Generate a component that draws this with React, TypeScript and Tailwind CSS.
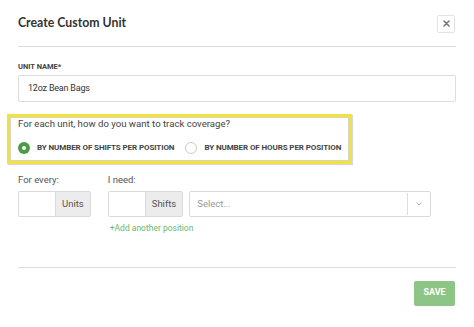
import React from "react"

function Radio({ checked, label }: { checked?: boolean; label: string }) {
  return (
    <label className="flex items-center gap-[7px] whitespace-nowrap">
      {checked ? (
        <span className="flex h-[12px] w-[12px] items-center justify-center rounded-full bg-[#4a9d45]">
          <span className="h-[4px] w-[4px] rounded-full bg-white" />
        </span>
      ) : (
        <span className="h-[12px] w-[12px] rounded-full border border-[#c8c8c8] bg-white" />
      )}
      <span className="text-[8px] font-bold uppercase tracking-[-0.1px] text-[#444]">{label}</span>
    </label>
  )
}

function AddonInput({ addon }: { addon: string }) {
  return (
    <div className="flex h-[26px] overflow-hidden rounded-[2px] border border-[#d9d9d9]">
      <div className="w-[36px] bg-white" />
      <div className="flex items-center border-l border-[#d9d9d9] bg-[#ececec] px-[6px] text-[9.5px] text-[#555]">{addon}</div>
    </div>
  )
}

export default function App() {
  return (
    <div className="h-[327px] w-[474px] bg-white px-[18px] font-['Roboto','Open_Sans',sans-serif] text-[#333]">
      {/* header */}
      <div className="flex h-[47px] items-center justify-between border-b border-[#ddd] pt-[1px]">
        <h1 className="font-['Lato',sans-serif] text-[12.3px] font-bold text-[#333]">Create Custom Unit</h1>
        <button className="mr-[1px] flex h-[18px] w-[18px] items-center justify-center rounded-[2px] border border-[#e2e2e2]">
          <svg width="7" height="7" viewBox="0 0 7 7" stroke="#777" strokeWidth="1.6" strokeLinecap="round">
            <path d="M1 1 L6 6 M6 1 L1 6" />
          </svg>
        </button>
      </div>

      {/* unit name */}
      <div className="pt-[14px] text-[7.5px] font-bold uppercase text-[#444]">Unit Name*</div>
      <div className="mt-[3px] flex h-[27px] items-center rounded-[2px] border border-[#dcdcdc] px-[9px] text-[9px] tracking-[-0.2px] text-[#333]">
        12oz Bean Bags
      </div>

      {/* coverage choice */}
      <div className="-ml-[11px] mt-[12px] w-[345px] border-[3px] border-[#f2e23c] px-[8px] pb-[7px] pt-0 shadow-[inset_0_0_0_1px_rgba(90,80,40,0.25),1px_1px_1px_rgba(0,0,0,0.15)]">
        <div className="text-[9.6px] text-[#444]">For each unit, how do you want to track coverage?</div>
        <div className="mt-[10px] flex items-center gap-[11px]">
          <Radio checked label="By number of shifts per position" />
          <Radio label="By number of hours per position" />
        </div>
      </div>

      {/* requirement row */}
      <div className="mt-[9px] flex gap-[17px]">
        <div className="flex flex-col">
          <span className="text-[9.5px] text-[#555]">For every:</span>
          <div className="mt-[4px]">
            <AddonInput addon="Units" />
          </div>
        </div>
        <div className="flex flex-col">
          <span className="text-[9.5px] text-[#555]">I need:</span>
          <div className="mt-[4px] flex gap-[6px]">
            <AddonInput addon="Shifts" />
            <div className="flex h-[26px] w-[242px] rounded-[2px] border border-[#d9d9d9]">
              <div className="flex flex-1 items-center px-[7px] text-[9.5px] text-[#999]">Select...</div>
              <div className="my-[1px] flex w-[23px] items-center justify-center border-l border-[#ddd]">
                <svg width="6" height="4" viewBox="0 0 6 4" fill="none" stroke="#aaa" strokeWidth="0.9">
                  <path d="M0.5 0.5 L3 3 L5.5 0.5" />
                </svg>
              </div>
            </div>
          </div>
          <span className="ml-[2px] mt-[5px] text-[8.5px] text-[#6fb66a]">+Add another position</span>
        </div>
      </div>

      {/* footer */}
      <div className="mt-[32px] border-t border-[#ddd]" />
      <div className="flex justify-end pt-[13px]">
        <button className="mr-[1px] h-[25px] w-[41px] rounded-[2px] bg-[#8cc585] text-[9px] font-bold text-white">SAVE</button>
      </div>
    </div>
  )
}
